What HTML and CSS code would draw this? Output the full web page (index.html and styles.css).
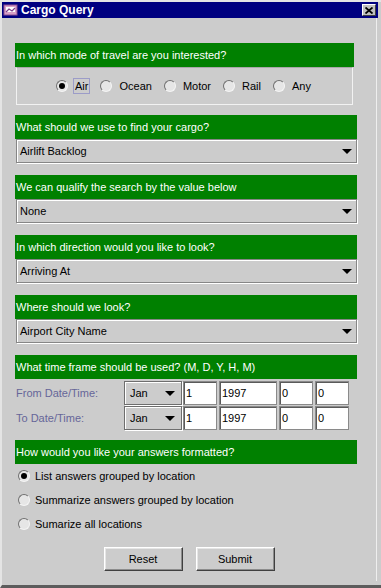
FILE: index.html
```html
<!DOCTYPE html>
<html lang="en">
<head>
    <meta charset="UTF-8">
    <title>Cargo Query</title>
    <link rel="stylesheet" href="styles.css">
</head>
<body>
<div class="window">
    <div class="titlebar">
        <svg class="app-icon" width="16" height="14" viewBox="0 0 16 14">
            <rect x="1" y="2" width="13" height="10" fill="#d9a0c8"/>
            <rect x="3" y="4" width="9" height="5" fill="#ffffff"/>
            <path d="M3 9 L6 6 L9 8 L12 5" stroke="#7a3f8a" stroke-width="1.2" fill="none"/>
            <rect x="1" y="2" width="13" height="10" fill="none" stroke="#8a5090" stroke-width="1"/>
        </svg>
        <span class="title">Cargo Query</span>
        <span class="close-btn">
            <svg width="8" height="7" viewBox="0 0 8 7">
                <path d="M0.5 0.5 L7.5 6.5 M7.5 0.5 L0.5 6.5" stroke="#000" stroke-width="1.8"/>
            </svg>
        </span>
    </div>

    <div class="content">
        <!-- mode of travel -->
        <div class="section first">
            <div class="header narrow">In which mode of travel are you interested?</div>
            <div class="mode-box">
                <label class="radio"><span class="dot checked"></span><span class="radio-text focus">Air</span></label>
                <label class="radio"><span class="dot"></span><span class="radio-text">Ocean</span></label>
                <label class="radio"><span class="dot"></span><span class="radio-text">Motor</span></label>
                <label class="radio"><span class="dot"></span><span class="radio-text">Rail</span></label>
                <label class="radio"><span class="dot"></span><span class="radio-text">Any</span></label>
            </div>
        </div>

        <div class="section">
            <div class="header">What should we use to find your cargo?</div>
            <div class="combo"><span>Airlift Backlog</span><span class="arrow"></span></div>
        </div>

        <div class="section">
            <div class="header">We can qualify the search by the value below</div>
            <div class="combo"><span>None</span><span class="arrow"></span></div>
        </div>

        <div class="section">
            <div class="header">In which direction would you like to look?</div>
            <div class="combo"><span>Arriving At</span><span class="arrow"></span></div>
        </div>

        <div class="section">
            <div class="header">Where should we look?</div>
            <div class="combo"><span>Airport City Name</span><span class="arrow"></span></div>
        </div>

        <!-- time frame -->
        <div class="section time">
            <div class="header">What time frame should be used? (M, D, Y, H, M)</div>
            <div class="date-row">
                <span class="date-label">From Date/Time:</span>
                <div class="combo month"><span>Jan</span><span class="arrow"></span></div>
                <input type="text" class="field short" value="1">
                <input type="text" class="field long" value="1997">
                <input type="text" class="field short" value="0">
                <input type="text" class="field short" value="0">
            </div>
            <div class="date-row">
                <span class="date-label">To Date/Time:</span>
                <div class="combo month"><span>Jan</span><span class="arrow"></span></div>
                <input type="text" class="field short" value="1">
                <input type="text" class="field long" value="1997">
                <input type="text" class="field short" value="0">
                <input type="text" class="field short" value="0">
            </div>
        </div>

        <!-- answer format -->
        <div class="section format">
            <div class="header">How would you like your answers formatted?</div>
            <label class="option"><span class="dot checked"></span>List answers grouped by location</label>
            <label class="option"><span class="dot"></span>Summarize answers grouped by location</label>
            <label class="option"><span class="dot"></span>Sumarize all locations</label>
        </div>

        <div class="buttons">
            <button>Reset</button>
            <button>Submit</button>
        </div>
    </div>
</div>
</body>
</html>
```

FILE: styles.css
```css
body {
    margin: 0;
    font-family: "Liberation Sans", Arial, sans-serif;
    font-size: 11px;
    background: #cccccc;
}
.window {
    width: 381px;
    height: 588px;
    box-sizing: border-box;
    background: #cccccc;
    border-top: 2px solid #e4e4e4;
    border-left: 2px solid #e4e4e4;
    border-bottom: 3px solid #5c5c5c;
}
.titlebar {
    height: 16px;
    margin-right: 3px;
    background: #000080;
    display: flex;
    align-items: center;
    padding: 0 2px 0 1px;
}
.app-icon {
    display: block;
}
.title {
    color: #ffffff;
    font-weight: bold;
    font-size: 12px;
    margin-left: 2px;
    flex: 1;
}
.close-btn {
    width: 12px;
    height: 10px;
    background: #c0c0c0;
    border: 1px solid;
    border-color: #ffffff #404040 #404040 #ffffff;
    display: flex;
    align-items: center;
    justify-content: center;
}
.content {
    padding: 25px 19px 0 13px;
    border-right: 1px solid #eeeeee;
    height: 563px;
    box-sizing: border-box;
    margin-right: 4px;
}
.section {
    margin-bottom: 12px;
}
.section.first {
    margin-bottom: 10px;
}
.header {
    height: 24px;
    line-height: 24px;
    background: #008000;
    color: #ffffff;
    padding-left: 1px;
}
.header.narrow {
    margin-right: 3px;
}
.mode-box {
    height: 38px;
    box-sizing: border-box;
    margin: 0 4px 0 1px;
    border: 1px solid #f2f2f2;
    border-top-color: #a8a8a8;
    display: flex;
    align-items: center;
    justify-content: center;
    gap: 10px;
}
.radio {
    display: flex;
    align-items: center;
}
.dot {
    width: 12px;
    height: 12px;
    box-sizing: border-box;
    border-radius: 50%;
    border: 1px solid;
    border-color: #707070 #f4f4f4 #f4f4f4 #707070;
    background: #e6e6e6;
    display: flex;
    align-items: center;
    justify-content: center;
    flex-shrink: 0;
}
.dot.checked::after {
    content: "";
    width: 6px;
    height: 6px;
    border-radius: 50%;
    background: #000000;
}
.radio-text {
    margin-left: 5px;
    padding: 1px 1px;
    border: 1px solid transparent;
}
.radio-text.focus {
    border-color: #9c9cc8;
}
.combo {
    height: 24px;
    box-sizing: border-box;
    margin-left: 1px;
    border: 1px solid #868686;
    box-shadow: inset 1px 1px 0 #ffffff, 1px 1px 0 #ffffff;
    background: #cccccc;
    display: flex;
    align-items: center;
    justify-content: space-between;
    padding: 0 4px 0 3px;
}
.arrow {
    width: 0;
    height: 0;
    border-left: 5px solid transparent;
    border-right: 5px solid transparent;
    border-top: 5px solid #000000;
}
.time {
    margin-bottom: 10px;
}
.date-row {
    display: flex;
    align-items: center;
    height: 24px;
    margin-top: 2px;
}
.date-row + .date-row {
    margin-top: 1px;
}
.date-label {
    width: 108px;
    box-sizing: border-box;
    padding-left: 1px;
    color: #666699;
    flex-shrink: 0;
}
.combo.month {
    width: 58px;
    margin-left: 1px;
    margin-right: 1px;
    padding: 0 6px 0 5px;
    border-color: #6e6e6e;
}
.field {
    height: 24px;
    box-sizing: border-box;
    margin: 0 2px 0 0;
    padding: 0 0 0 2px;
    border: 1px solid #8a8a8a;
    box-shadow: inset 1px 1px 0 #5a5a5a;
    background: #ffffff;
    font-family: "Liberation Sans", Arial, sans-serif;
    font-size: 11px;
    color: #000000;
    outline: none;
}
.field.short {
    width: 34px;
}
.field.long {
    width: 58px;
}
.format {
    margin-bottom: 11px;
}
.option {
    display: flex;
    align-items: center;
    height: 24px;
    padding-left: 3px;
}
.option .dot {
    margin-right: 5px;
}
.buttons {
    display: flex;
    justify-content: center;
    gap: 13px;
    padding-left: 6px;
}
button {
    width: 79px;
    height: 24px;
    background: #cccccc;
    border: 1px solid;
    border-color: #ffffff #404040 #404040 #ffffff;
    box-shadow: inset -1px -1px 0 #8c8c8c, inset 1px 1px 0 #e6e6e6;
    font-family: "Liberation Sans", Arial, sans-serif;
    font-size: 11px;
    color: #000000;
    padding: 0;
}
```
